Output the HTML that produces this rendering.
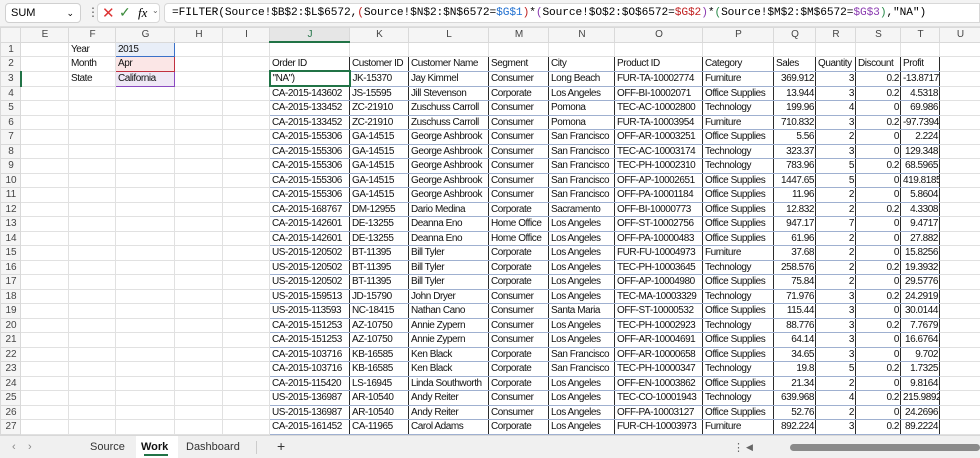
<!DOCTYPE html>
<html><head><meta charset="utf-8"><style>
*{margin:0;padding:0;box-sizing:border-box}
body{width:980px;height:458px;overflow:hidden;background:#fff;font-family:"Liberation Sans",Arial,sans-serif;position:relative}
#fb{position:absolute;left:0;top:0;width:980px;height:27px;background:#f3f3f3;border-bottom:1px solid #e0e0e0}
.nb{position:absolute;left:5px;top:3px;width:76px;height:20px;background:#fff;border:1px solid #d0d0d0;border-radius:4px;font-size:11px;line-height:18px;padding-left:5px}
.ib{position:absolute;left:97px;top:3px;width:63px;height:20px;background:#fff;border:1px solid #d8d8d8;border-radius:4px}
.fx{position:absolute;left:164px;top:3px;width:816px;height:20px;background:#fff;border:1px solid #d8d8d8;border-radius:4px 0 0 4px;font-family:"Liberation Mono",monospace;font-size:11.2px;line-height:18px;padding-left:7px;white-space:nowrap;letter-spacing:-0.1px}
table{position:absolute;left:0;top:27px;width:980px;border-collapse:collapse;table-layout:fixed;font-size:10px;letter-spacing:-0.45px}
td{height:14.5px;border:1px solid #e1e1e1;padding:0 1px 0 2px;white-space:nowrap;overflow:hidden;line-height:13px;color:#111}
tr.h td{height:13px;background:#f5f5f5;text-align:center;color:#444;border-color:#d9d9d9;letter-spacing:0}
td.rh{text-align:center;background:#f5f5f5;color:#444;border-color:#d9d9d9;letter-spacing:0}
td.t{border:1px solid #2a2a2a;border-bottom-color:#9fb0d0;border-top-color:#9fb0d0}
td.n{text-align:right}
#tabs{position:absolute;left:0;top:435px;width:980px;height:23px;background:#f0f0f0;border-top:1px solid #d8d8d8;font-size:11px;color:#333}
#tabs span{position:absolute;top:5px}
</style></head><body>
<div id="fb">
<div class="nb">SUM<span style="position:absolute;right:6px;top:0;font-size:9px">&#8964;</span></div>
<span style="position:absolute;left:87px;top:5px;font-size:12px;color:#555">&#8942;</span>
<div class="ib"><span style="position:absolute;left:4px;top:0px;color:#d33;font-size:15px">&#10005;</span><span style="position:absolute;left:21px;top:0px;color:#3a8a3a;font-size:14px">&#10003;</span><span style="position:absolute;left:40px;top:1px;font-family:'Liberation Serif',serif;font-style:italic;font-size:13px">fx</span><span style="position:absolute;left:54px;top:2px;font-size:8px;color:#666">&#8964;</span></div>
<div class="fx">=FILTER(Source!$B$2:$L$6572,<span style="color:#c02020">(</span>Source!$N$2:$N$6572=<span style="color:#1f6fd0">$G$1</span><span style="color:#c02020">)</span>*<span style="color:#8a3ab0">(</span>Source!$O$2:$O$6572=<span style="color:#c02020">$G$2</span><span style="color:#8a3ab0">)</span>*<span style="color:#2a8a4a">(</span>Source!$M$2:$M$6572=<span style="color:#8a3ab0">$G$3</span><span style="color:#2a8a4a">)</span>,"NA")</div>
</div>
<table>
<colgroup><col style="width:20px"><col style="width:48px"><col style="width:47px"><col style="width:59px"><col style="width:48px"><col style="width:47px"><col style="width:80px"><col style="width:59px"><col style="width:80px"><col style="width:60px"><col style="width:66px"><col style="width:88px"><col style="width:71px"><col style="width:42px"><col style="width:40px"><col style="width:45px"><col style="width:39px"><col style="width:41px"></colgroup>
<tr class="h"><td></td><td>E</td><td>F</td><td>G</td><td>H</td><td>I</td><td style="background:#e6e6e6;border-bottom:2px solid #217346;color:#217346">J</td><td>K</td><td>L</td><td>M</td><td>N</td><td>O</td><td>P</td><td>Q</td><td>R</td><td>S</td><td>T</td><td>U</td></tr>
<tr><td class="rh">1</td><td></td><td>Year</td><td style="background:#e8eef8;border:1px solid #3a70c8">2015</td><td></td><td></td><td></td><td></td><td></td><td></td><td></td><td></td><td></td><td></td><td></td><td></td><td></td><td></td></tr>
<tr><td class="rh">2</td><td></td><td>Month</td><td style="background:#fbe6e6;border:1px solid #c03040">Apr</td><td></td><td></td><td class="t">Order ID</td><td class="t">Customer ID</td><td class="t">Customer Name</td><td class="t">Segment</td><td class="t">City</td><td class="t">Product ID</td><td class="t">Category</td><td class="t">Sales</td><td class="t">Quantity</td><td class="t">Discount</td><td class="t">Profit</td><td></td></tr>
<tr><td class="rh" style="border-right:2px solid #217346">3</td><td></td><td>State</td><td style="background:#efe8f6;border:1px solid #8a4ac0">California</td><td></td><td></td><td class="t" style="border:2px solid #217346">"NA")</td><td class="t">JK-15370</td><td class="t">Jay Kimmel</td><td class="t">Consumer</td><td class="t">Long Beach</td><td class="t">FUR-TA-10002774</td><td class="t">Furniture</td><td class="t n">369.912</td><td class="t n">3</td><td class="t n">0.2</td><td class="t n">-13.8717</td><td></td></tr>
<tr><td class="rh">4</td><td></td><td></td><td></td><td></td><td></td><td class="t">CA-2015-143602</td><td class="t">JS-15595</td><td class="t">Jill Stevenson</td><td class="t">Corporate</td><td class="t">Los Angeles</td><td class="t">OFF-BI-10002071</td><td class="t">Office Supplies</td><td class="t n">13.944</td><td class="t n">3</td><td class="t n">0.2</td><td class="t n">4.5318</td><td></td></tr>
<tr><td class="rh">5</td><td></td><td></td><td></td><td></td><td></td><td class="t">CA-2015-133452</td><td class="t">ZC-21910</td><td class="t">Zuschuss Carroll</td><td class="t">Consumer</td><td class="t">Pomona</td><td class="t">TEC-AC-10002800</td><td class="t">Technology</td><td class="t n">199.96</td><td class="t n">4</td><td class="t n">0</td><td class="t n">69.986</td><td></td></tr>
<tr><td class="rh">6</td><td></td><td></td><td></td><td></td><td></td><td class="t">CA-2015-133452</td><td class="t">ZC-21910</td><td class="t">Zuschuss Carroll</td><td class="t">Consumer</td><td class="t">Pomona</td><td class="t">FUR-TA-10003954</td><td class="t">Furniture</td><td class="t n">710.832</td><td class="t n">3</td><td class="t n">0.2</td><td class="t n">-97.7394</td><td></td></tr>
<tr><td class="rh">7</td><td></td><td></td><td></td><td></td><td></td><td class="t">CA-2015-155306</td><td class="t">GA-14515</td><td class="t">George Ashbrook</td><td class="t">Consumer</td><td class="t">San Francisco</td><td class="t">OFF-AR-10003251</td><td class="t">Office Supplies</td><td class="t n">5.56</td><td class="t n">2</td><td class="t n">0</td><td class="t n">2.224</td><td></td></tr>
<tr><td class="rh">8</td><td></td><td></td><td></td><td></td><td></td><td class="t">CA-2015-155306</td><td class="t">GA-14515</td><td class="t">George Ashbrook</td><td class="t">Consumer</td><td class="t">San Francisco</td><td class="t">TEC-AC-10003174</td><td class="t">Technology</td><td class="t n">323.37</td><td class="t n">3</td><td class="t n">0</td><td class="t n">129.348</td><td></td></tr>
<tr><td class="rh">9</td><td></td><td></td><td></td><td></td><td></td><td class="t">CA-2015-155306</td><td class="t">GA-14515</td><td class="t">George Ashbrook</td><td class="t">Consumer</td><td class="t">San Francisco</td><td class="t">TEC-PH-10002310</td><td class="t">Technology</td><td class="t n">783.96</td><td class="t n">5</td><td class="t n">0.2</td><td class="t n">68.5965</td><td></td></tr>
<tr><td class="rh">10</td><td></td><td></td><td></td><td></td><td></td><td class="t">CA-2015-155306</td><td class="t">GA-14515</td><td class="t">George Ashbrook</td><td class="t">Consumer</td><td class="t">San Francisco</td><td class="t">OFF-AP-10002651</td><td class="t">Office Supplies</td><td class="t n">1447.65</td><td class="t n">5</td><td class="t n">0</td><td class="t n">419.8185</td><td></td></tr>
<tr><td class="rh">11</td><td></td><td></td><td></td><td></td><td></td><td class="t">CA-2015-155306</td><td class="t">GA-14515</td><td class="t">George Ashbrook</td><td class="t">Consumer</td><td class="t">San Francisco</td><td class="t">OFF-PA-10001184</td><td class="t">Office Supplies</td><td class="t n">11.96</td><td class="t n">2</td><td class="t n">0</td><td class="t n">5.8604</td><td></td></tr>
<tr><td class="rh">12</td><td></td><td></td><td></td><td></td><td></td><td class="t">CA-2015-168767</td><td class="t">DM-12955</td><td class="t">Dario Medina</td><td class="t">Corporate</td><td class="t">Sacramento</td><td class="t">OFF-BI-10000773</td><td class="t">Office Supplies</td><td class="t n">12.832</td><td class="t n">2</td><td class="t n">0.2</td><td class="t n">4.3308</td><td></td></tr>
<tr><td class="rh">13</td><td></td><td></td><td></td><td></td><td></td><td class="t">CA-2015-142601</td><td class="t">DE-13255</td><td class="t">Deanna Eno</td><td class="t">Home Office</td><td class="t">Los Angeles</td><td class="t">OFF-ST-10002756</td><td class="t">Office Supplies</td><td class="t n">947.17</td><td class="t n">7</td><td class="t n">0</td><td class="t n">9.4717</td><td></td></tr>
<tr><td class="rh">14</td><td></td><td></td><td></td><td></td><td></td><td class="t">CA-2015-142601</td><td class="t">DE-13255</td><td class="t">Deanna Eno</td><td class="t">Home Office</td><td class="t">Los Angeles</td><td class="t">OFF-PA-10000483</td><td class="t">Office Supplies</td><td class="t n">61.96</td><td class="t n">2</td><td class="t n">0</td><td class="t n">27.882</td><td></td></tr>
<tr><td class="rh">15</td><td></td><td></td><td></td><td></td><td></td><td class="t">US-2015-120502</td><td class="t">BT-11395</td><td class="t">Bill Tyler</td><td class="t">Corporate</td><td class="t">Los Angeles</td><td class="t">FUR-FU-10004973</td><td class="t">Furniture</td><td class="t n">37.68</td><td class="t n">2</td><td class="t n">0</td><td class="t n">15.8256</td><td></td></tr>
<tr><td class="rh">16</td><td></td><td></td><td></td><td></td><td></td><td class="t">US-2015-120502</td><td class="t">BT-11395</td><td class="t">Bill Tyler</td><td class="t">Corporate</td><td class="t">Los Angeles</td><td class="t">TEC-PH-10003645</td><td class="t">Technology</td><td class="t n">258.576</td><td class="t n">2</td><td class="t n">0.2</td><td class="t n">19.3932</td><td></td></tr>
<tr><td class="rh">17</td><td></td><td></td><td></td><td></td><td></td><td class="t">US-2015-120502</td><td class="t">BT-11395</td><td class="t">Bill Tyler</td><td class="t">Corporate</td><td class="t">Los Angeles</td><td class="t">OFF-AP-10004980</td><td class="t">Office Supplies</td><td class="t n">75.84</td><td class="t n">2</td><td class="t n">0</td><td class="t n">29.5776</td><td></td></tr>
<tr><td class="rh">18</td><td></td><td></td><td></td><td></td><td></td><td class="t">US-2015-159513</td><td class="t">JD-15790</td><td class="t">John Dryer</td><td class="t">Consumer</td><td class="t">Los Angeles</td><td class="t">TEC-MA-10003329</td><td class="t">Technology</td><td class="t n">71.976</td><td class="t n">3</td><td class="t n">0.2</td><td class="t n">24.2919</td><td></td></tr>
<tr><td class="rh">19</td><td></td><td></td><td></td><td></td><td></td><td class="t">US-2015-113593</td><td class="t">NC-18415</td><td class="t">Nathan Cano</td><td class="t">Consumer</td><td class="t">Santa Maria</td><td class="t">OFF-ST-10000532</td><td class="t">Office Supplies</td><td class="t n">115.44</td><td class="t n">3</td><td class="t n">0</td><td class="t n">30.0144</td><td></td></tr>
<tr><td class="rh">20</td><td></td><td></td><td></td><td></td><td></td><td class="t">CA-2015-151253</td><td class="t">AZ-10750</td><td class="t">Annie Zypern</td><td class="t">Consumer</td><td class="t">Los Angeles</td><td class="t">TEC-PH-10002923</td><td class="t">Technology</td><td class="t n">88.776</td><td class="t n">3</td><td class="t n">0.2</td><td class="t n">7.7679</td><td></td></tr>
<tr><td class="rh">21</td><td></td><td></td><td></td><td></td><td></td><td class="t">CA-2015-151253</td><td class="t">AZ-10750</td><td class="t">Annie Zypern</td><td class="t">Consumer</td><td class="t">Los Angeles</td><td class="t">OFF-AR-10004691</td><td class="t">Office Supplies</td><td class="t n">64.14</td><td class="t n">3</td><td class="t n">0</td><td class="t n">16.6764</td><td></td></tr>
<tr><td class="rh">22</td><td></td><td></td><td></td><td></td><td></td><td class="t">CA-2015-103716</td><td class="t">KB-16585</td><td class="t">Ken Black</td><td class="t">Corporate</td><td class="t">San Francisco</td><td class="t">OFF-AR-10000658</td><td class="t">Office Supplies</td><td class="t n">34.65</td><td class="t n">3</td><td class="t n">0</td><td class="t n">9.702</td><td></td></tr>
<tr><td class="rh">23</td><td></td><td></td><td></td><td></td><td></td><td class="t">CA-2015-103716</td><td class="t">KB-16585</td><td class="t">Ken Black</td><td class="t">Corporate</td><td class="t">San Francisco</td><td class="t">TEC-PH-10000347</td><td class="t">Technology</td><td class="t n">19.8</td><td class="t n">5</td><td class="t n">0.2</td><td class="t n">1.7325</td><td></td></tr>
<tr><td class="rh">24</td><td></td><td></td><td></td><td></td><td></td><td class="t">CA-2015-115420</td><td class="t">LS-16945</td><td class="t">Linda Southworth</td><td class="t">Corporate</td><td class="t">Los Angeles</td><td class="t">OFF-EN-10003862</td><td class="t">Office Supplies</td><td class="t n">21.34</td><td class="t n">2</td><td class="t n">0</td><td class="t n">9.8164</td><td></td></tr>
<tr><td class="rh">25</td><td></td><td></td><td></td><td></td><td></td><td class="t">US-2015-136987</td><td class="t">AR-10540</td><td class="t">Andy Reiter</td><td class="t">Consumer</td><td class="t">Los Angeles</td><td class="t">TEC-CO-10001943</td><td class="t">Technology</td><td class="t n">639.968</td><td class="t n">4</td><td class="t n">0.2</td><td class="t n">215.9892</td><td></td></tr>
<tr><td class="rh">26</td><td></td><td></td><td></td><td></td><td></td><td class="t">US-2015-136987</td><td class="t">AR-10540</td><td class="t">Andy Reiter</td><td class="t">Consumer</td><td class="t">Los Angeles</td><td class="t">OFF-PA-10003127</td><td class="t">Office Supplies</td><td class="t n">52.76</td><td class="t n">2</td><td class="t n">0</td><td class="t n">24.2696</td><td></td></tr>
<tr><td class="rh">27</td><td></td><td></td><td></td><td></td><td></td><td class="t">CA-2015-161452</td><td class="t">CA-11965</td><td class="t">Carol Adams</td><td class="t">Corporate</td><td class="t">Los Angeles</td><td class="t">FUR-CH-10003973</td><td class="t">Furniture</td><td class="t n">892.224</td><td class="t n">3</td><td class="t n">0.2</td><td class="t n">89.2224</td><td></td></tr>
<tr><td class="rh">28</td><td></td><td></td><td></td><td></td><td></td><td class="t">CA-2015-127209</td><td class="t">PW-11110</td><td class="t">Paul Watters</td><td class="t">Corporate</td><td class="t">San Diego</td><td class="t">FUR-CH-10002017</td><td class="t">Furniture</td><td class="t n">63.936</td><td class="t n">2</td><td class="t n">0.2</td><td class="t n">6.3936</td><td></td></tr>
</table>
<div id="tabs">
<span style="left:12px;color:#888">&#8249;</span><span style="left:28px;color:#888">&#8250;</span>
<span style="left:90px">Source</span>
<div style="position:absolute;left:136px;top:0;width:42px;height:22px;background:#fff"></div>
<span style="left:141px;font-weight:bold;color:#111">Work</span>
<div style="position:absolute;left:144px;top:18px;width:24px;height:2px;background:#217346"></div>
<span style="left:186px">Dashboard</span>
<div style="position:absolute;left:256px;top:5px;width:1px;height:13px;background:#ccc"></div>
<span style="left:277px;font-size:14px;top:2px">+</span>
<span style="left:733px;color:#666">&#8942;</span>
<span style="left:746px;color:#666;font-size:9px;top:6px">&#9664;</span>
<div style="position:absolute;left:790px;top:8px;width:190px;height:7px;background:#8a8a8a;border-radius:4px"></div>
</div>
</body></html>
